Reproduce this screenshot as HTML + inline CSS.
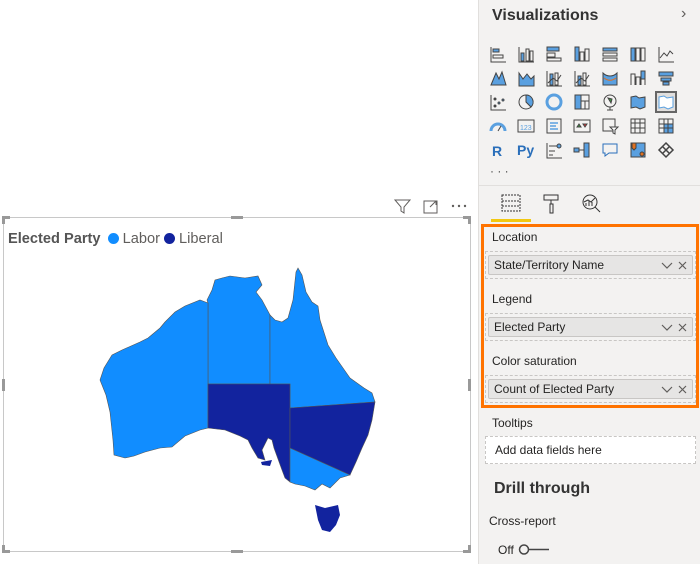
<!DOCTYPE html>
<html><head><meta charset="utf-8"><style>
*{margin:0;padding:0;box-sizing:border-box}
body{width:700px;height:564px;background:#fff;font-family:"Liberation Sans",sans-serif;position:relative;overflow:hidden;color:#252423}
.a{position:absolute}
#panel{left:478px;top:0;width:222px;height:564px;background:#f3f2f1;border-left:1px solid #e1dfdd}
.lbl{position:absolute;font-size:12px;color:#252423}
.well{position:absolute;left:485px;width:211px;height:28px;border:1px dashed #c8c6c4}
.pill{position:absolute;left:2px;top:3px;right:2px;height:20px;background:#e6e5e4;border:1px solid #c8c6c4;border-radius:2px;font-size:12px;line-height:18px;padding-left:5px;color:#252423}
.pill svg{position:absolute;right:3px;top:4px}
.h{position:absolute;background:#999;}
</style></head><body>
<div class="a" style="left:3px;top:217px;width:468px;height:335px;border:1px solid #c8c8c8"></div>
<div class="h" style="left:2px;top:216px;width:8px;height:3px"></div><div class="h" style="left:2px;top:216px;width:3px;height:8px"></div>
<div class="h" style="left:463px;top:216px;width:8px;height:3px"></div><div class="h" style="left:468px;top:216px;width:3px;height:8px"></div>
<div class="h" style="left:2px;top:550px;width:8px;height:3px"></div><div class="h" style="left:2px;top:545px;width:3px;height:8px"></div>
<div class="h" style="left:463px;top:550px;width:8px;height:3px"></div><div class="h" style="left:468px;top:545px;width:3px;height:8px"></div>
<div class="h" style="left:231px;top:216px;width:12px;height:3px"></div><div class="h" style="left:231px;top:550px;width:12px;height:3px"></div>
<div class="h" style="left:2px;top:379px;width:3px;height:12px"></div><div class="h" style="left:468px;top:379px;width:3px;height:12px"></div>
<svg class="a" style="left:393px;top:198px" width="80" height="18" viewBox="0 0 80 18">
<path d="M2 2h15l-6 7v6l-3-2v-4z" fill="none" stroke="#605e5c"/>
<rect x="31" y="3" width="13" height="12" fill="none" stroke="#605e5c"/><path d="M37 9l6-6M39 3h4v4" stroke="#605e5c" fill="none"/>
<circle cx="60" cy="8" r="1.2" fill="#605e5c"/><circle cx="66" cy="8" r="1.2" fill="#605e5c"/><circle cx="72" cy="8" r="1.2" fill="#605e5c"/>
</svg>
<div class="a" style="left:8px;top:231px;font-size:14.6px;white-space:nowrap;color:#605e5c"><b style="color:#555">Elected Party</b> <span style="display:inline-block;width:11px;height:11px;border-radius:50%;background:#118dff;vertical-align:-1px;margin-left:3px"></span> Labor <span style="display:inline-block;width:11px;height:11px;border-radius:50%;background:#12239e;vertical-align:-1px"></span> Liberal</div>
<svg class="a" style="left:0;top:0" width="478" height="564" viewBox="0 0 478 564">
<path d="M208,303 L207,300 L212,290 L215,280 L222,278 L230,276 L245,278 L258,276 L262,285 L256,292 L262,300 L270,315 L270,384 L208,384 Z" fill="#118dff" stroke="#555" stroke-width=".6"/>
<path d="M208,303 L200,300 L185,306 L175,312 L165,322 L160,328 L148,338 L140,342 L122,350 L112,355 L104,368 L100,380 L106,395 L110,412 L113,440 L114,455 L125,458 L134,456 L145,452 L160,448 L172,447 L185,436 L200,430 L208,428 Z" fill="#118dff" stroke="#555" stroke-width=".6"/>
<path d="M270,315 L275,320 L282,322 L288,318 L293,300 L296,272 L298,268 L302,275 L306,292 L312,302 L318,306 L320,320 L328,345 L336,358 L343,368 L350,378 L364,388 L372,393 L375,402 L290,408 L290,384 L270,384 Z" fill="#118dff" stroke="#555" stroke-width=".6"/>
<path d="M208,384 L290,384 L290,482 L285,478 L282,470 L274,448 L272,440 L268,438 L262,450 L265,460 L258,458 L252,448 L248,440 L240,436 L225,430 L208,428 Z" fill="#12239e" stroke="#555" stroke-width=".6"/>
<path d="M290,408 L375,402 L372,420 L368,435 L362,448 L356,462 L350,475 L290,448 Z" fill="#12239e" stroke="#555" stroke-width=".6"/>
<path d="M290,448 L350,475 L340,478 L330,488 L322,484 L315,490 L305,486 L295,484 L290,482 Z" fill="#118dff" stroke="#555" stroke-width=".6"/>
<path d="M315,505 L325,508 L338,505 L340,515 L336,525 L330,532 L322,530 L318,520 Z" fill="#12239e"/>
<path d="M261,462 L272,460 L270,466 L262,465 Z" fill="#12239e"/>
</svg>
<div class="a" id="panel"></div>
<div class="lbl" style="left:492px;top:7px;font-size:16px;font-weight:bold;color:#333">Visualizations</div>
<div class="lbl" style="left:681px;top:5px;font-size:16px;color:#605e5c">›</div>
<svg class="a" style="left:480px;top:40px" width="220" height="140" viewBox="0 0 220 140">
<g fill="none" stroke="#444" stroke-width="1">
<g transform="translate(10,6)"><path d="M1 1v15h15"/><rect x="3" y="3" width="6" height="3" fill="#5aa0e0"/><rect x="3" y="9" width="10" height="3"/></g>
<g transform="translate(38,6)"><path d="M1 1v15h15"/><rect x="3" y="7" width="3" height="8" fill="#5aa0e0"/><rect x="8" y="3" width="3" height="12"/><rect x="12" y="5" width="3" height="10"/></g>
<g transform="translate(66,6)"><rect x="1" y="1" width="12" height="4" fill="#5aa0e0"/><rect x="1" y="7" width="8" height="4"/><rect x="1" y="12" width="14" height="3"/></g>
<g transform="translate(94,6)"><rect x="1" y="1" width="4" height="14" fill="#5aa0e0"/><rect x="6" y="6" width="4" height="9"/><rect x="11" y="3" width="4" height="12"/></g>
<g transform="translate(122,6)"><rect x="1" y="2" width="14" height="3" fill="#5aa0e0"/><rect x="1" y="7" width="14" height="3"/><rect x="1" y="12" width="14" height="3"/></g>
<g transform="translate(150,6)"><rect x="1" y="2" width="4" height="13" fill="#5aa0e0"/><rect x="6" y="2" width="4" height="13"/><rect x="11" y="2" width="4" height="13"/></g>
<g transform="translate(178,6)"><path d="M1 1v15h15M2 12l4-5 3 3 3-5 3 3"/></g>
<g transform="translate(10,30)"><path d="M1 15l5-12 3 6 3-7 4 13z" fill="#5aa0e0"/></g>
<g transform="translate(38,30)"><path d="M1 3l4 6 4-5 4 5 3-3v10H1z" fill="#5aa0e0"/></g>
<g transform="translate(66,30)"><path d="M1 1v15h15"/><rect x="4" y="4" width="3" height="11" fill="#5aa0e0"/><rect x="9" y="3" width="3" height="12"/><path d="M2 13l5-5 4 3 4-6"/></g>
<g transform="translate(94,30)"><path d="M1 1v15h15"/><rect x="4" y="6" width="3" height="9" fill="#5aa0e0"/><rect x="9" y="3" width="3" height="12"/><path d="M2 13l5-5 4 3 4-6"/></g>
<g transform="translate(122,30)"><path d="M1 3c4 4 10 4 14 0v12H1z" fill="#5aa0e0"/><path d="M2 8c4 3 8 3 12 0" stroke="#e07020"/></g>
<g transform="translate(150,30)"><path d="M1 15V4h4v11M6 15V7h4v8M11 15V1h4v14"/><rect x="11" y="1" width="4" height="8" fill="#5aa0e0"/></g>
<g transform="translate(178,30)"><path d="M1 2h14v4H1zM3 8h10v3H3zM5 12h6v3H5z" fill="#5aa0e0"/></g>
<g transform="translate(10,54)"><path d="M1 1v15h15"/><circle cx="5" cy="5" r="1" fill="#444"/><circle cx="9" cy="9" r="1" fill="#5aa0e0"/><circle cx="5" cy="12" r="1" fill="#444"/><circle cx="13" cy="6" r="1" fill="#5aa0e0"/></g>
<g transform="translate(38,54)"><circle cx="8" cy="8" r="7"/><path d="M8 1a7 7 0 0 1 5 12L8 8z" fill="#5aa0e0"/></g>
<g transform="translate(66,54)"><circle cx="8" cy="8" r="7" stroke="#5aa0e0" stroke-width="3"/></g>
<g transform="translate(94,54)"><rect x="1" y="1" width="14" height="14"/><rect x="1" y="1" width="6" height="14" fill="#5aa0e0"/><path d="M7 7h8M11 7v8"/></g>
<g transform="translate(122,54)"><circle cx="8" cy="7" r="6"/><path d="M6 4l4 1-1 4z" fill="#3a9a40"/><path d="M8 13v3M5 16h6"/></g>
<g transform="translate(150,54)"><path d="M1 3l5-1 3 2 6-1v10l-5 2-4-2-5 1z" fill="#5aa0e0"/></g>
<g transform="translate(176,52)"><rect x="0" y="0" width="20" height="20" fill="#e1dfdd" stroke="#666" stroke-width="2"/><path d="M3 5l5-1 3 2 6-1v10l-5 2-4-2-5 1z" fill="#fff" stroke="#5aa0e0"/></g>
<g transform="translate(10,78)"><path d="M1 13a7 7 0 0 1 14 0" stroke="#5aa0e0" stroke-width="3"/><path d="M8 13l3-5"/></g>
<g transform="translate(38,78)"><rect x="0" y="2" width="16" height="12"/><text x="2" y="12" font-size="7" fill="#5aa0e0" stroke="none" font-family="Liberation Sans">123</text></g>
<g transform="translate(66,78)"><rect x="1" y="1" width="14" height="14"/><path d="M4 5h8M4 8h6M4 11h8" stroke="#5aa0e0" stroke-width="1.5"/></g>
<g transform="translate(94,78)"><rect x="0" y="2" width="16" height="12"/><path d="M3 9l2-3 2 3z" fill="#3a9a40"/><path d="M9 6h4l-2 3z" fill="#e03030"/></g>
<g transform="translate(122,78)"><rect x="1" y="1" width="12" height="12"/><path d="M8 9h8l-3 3v4l-2-1v-3z" fill="#fff"/></g>
<g transform="translate(150,78)"><rect x="1" y="1" width="14" height="14"/><path d="M1 5h14M1 10h14M5 1v14M10 1v14"/></g>
<g transform="translate(178,78)"><rect x="1" y="1" width="14" height="14"/><rect x="6" y="6" width="9" height="9" fill="#5aa0e0"/><path d="M1 6h14M1 10h14M6 1v14M10 1v14"/></g>
<text x="12" y="116" font-size="14" font-weight="bold" fill="#2a6fba" stroke="none" font-family="Liberation Sans">R</text>
<text x="37" y="115" font-size="14" font-weight="bold" fill="#2a6fba" stroke="none" font-family="Liberation Sans">Py</text>
<g transform="translate(66,102)"><path d="M1 1v15h15M3 4h8M3 9h6M3 13h4"/><circle cx="13" cy="4" r="2" fill="#5aa0e0"/></g>
<g transform="translate(94,102)"><rect x="0" y="6" width="5" height="4" fill="#5aa0e0"/><rect x="10" y="1" width="5" height="14" fill="#5aa0e0"/><path d="M5 8h5"/></g>
<g transform="translate(122,102)"><path d="M1 2h14v9H7l-4 3v-3H1z" stroke="#2a6fba"/></g>
<g transform="translate(150,102)"><rect x="1" y="1" width="14" height="14" fill="#5aa0e0"/><path d="M2 1h4v5l-2 2-2-2z" fill="#e07020"/><circle cx="12" cy="12" r="2" fill="#e07020"/></g>
<g transform="translate(178,102)"><path d="M8 1l7 7-7 7-7-7z M4.5 4.5l7 7M11.5 4.5l-7 7" stroke-width="1.5"/></g>
<text x="10" y="135" font-size="12" fill="#444" stroke="none" font-family="Liberation Sans">· · ·</text>
</g>
</svg>
<div class="a" style="left:479px;top:185px;width:221px;height:1px;background:#e1dfdd"></div>
<svg class="a" style="left:498px;top:192px" width="110" height="24" viewBox="0 0 110 24">
<g fill="none" stroke="#333"><rect x="4" y="3" width="18" height="16" stroke-dasharray="2 1"/><path d="M4 9h18M4 14h18" stroke-dasharray="2 1"/>
<path d="M46 3h14v5H46zM53 8v4h-1v9h3v-9h-2"/>
<circle cx="92" cy="10" r="7"/><path d="M88 14v-3M91 14v-5M94 14v-4M97 15l5 5"/><path d="M86 10l4-2 3 2 4-4"/></g>
</svg>
<div class="a" style="left:491px;top:219px;width:40px;height:3px;background:#f2c811"></div>
<div class="a" style="left:481px;top:224px;width:218px;height:184px;border:3px solid #ff7300"></div>
<div class="lbl" style="left:492px;top:230px">Location</div>
<div class="well" style="top:251px"><div class="pill">State/Territory Name<svg width="28" height="11"><path d="M1 3l5 5 5-5M18 2l7 7M25 2l-7 7" fill="none" stroke="#605e5c" stroke-width="1.2"/></svg></div></div>
<div class="lbl" style="left:492px;top:292px">Legend</div>
<div class="well" style="top:313px"><div class="pill">Elected Party<svg width="28" height="11"><path d="M1 3l5 5 5-5M18 2l7 7M25 2l-7 7" fill="none" stroke="#605e5c" stroke-width="1.2"/></svg></div></div>
<div class="lbl" style="left:492px;top:354px">Color saturation</div>
<div class="well" style="top:375px"><div class="pill">Count of Elected Party<svg width="28" height="11"><path d="M1 3l5 5 5-5M18 2l7 7M25 2l-7 7" fill="none" stroke="#605e5c" stroke-width="1.2"/></svg></div></div>
<div class="lbl" style="left:492px;top:416px">Tooltips</div>
<div class="a" style="left:485px;top:436px;width:211px;height:28px;border:1px dashed #c8c6c4;background:#fff;font-size:12px;line-height:26px;padding-left:9px">Add data fields here</div>
<div class="lbl" style="left:494px;top:480px;font-size:16px;font-weight:bold;color:#333">Drill through</div>
<div class="lbl" style="left:489px;top:514px">Cross-report</div>
<div class="lbl" style="left:498px;top:543px">Off</div>
<svg class="a" style="left:518px;top:543px" width="34" height="14"><circle cx="6" cy="6.5" r="4.5" fill="none" stroke="#444" stroke-width="1.5"/><path d="M11 6.5h20" stroke="#444" stroke-width="1.5"/></svg>
</body></html>
